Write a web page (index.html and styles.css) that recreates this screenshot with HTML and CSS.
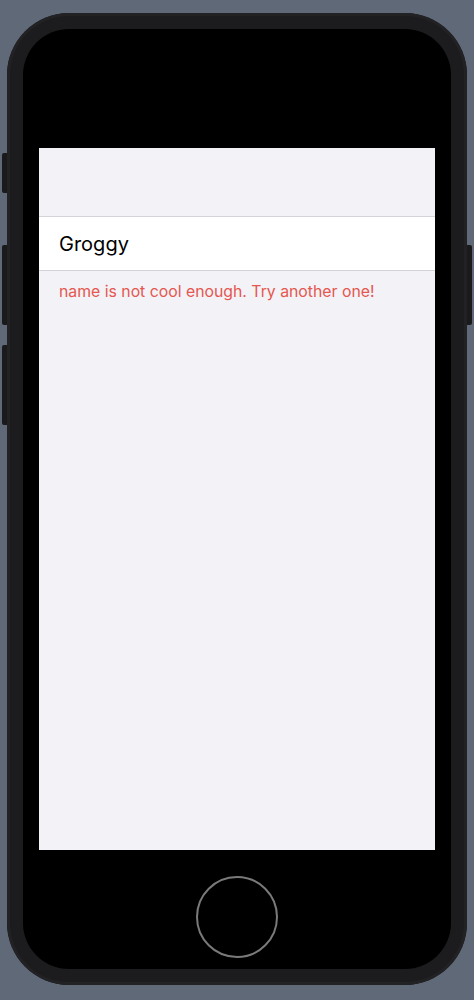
FILE: index.html
```html
<!DOCTYPE html>
<html>
<head>
<meta charset="utf-8">
<link rel="stylesheet" href="styles.css">
</head>
<body>
<div class="phone">
  <div class="btn btn-silent"></div>
  <div class="btn btn-volup"></div>
  <div class="btn btn-voldown"></div>
  <div class="btn btn-power"></div>
  <div class="bezel">
    <div class="screen">
      <div class="nav"></div>
      <div class="field">Groggy</div>
      <div class="error">name is not cool enough. Try another one!</div>
    </div>
    <div class="chin">
      <div class="home"></div>
    </div>
  </div>
</div>
</body>
</html>
```

FILE: styles.css
```css
html, body {
  margin: 0;
  padding: 0;
}
body {
  background: #5f6978;
  width: 474px;
  height: 1000px;
  padding: 13px 7px;
  box-sizing: border-box;
  font-family: Inter, "Noto Sans", sans-serif;
}
.phone {
  position: relative;
  width: 460px;
  height: 972px;
  box-sizing: border-box;
  padding: 16px;
  border-radius: 62px;
  background: #1c1c1e;
  box-shadow: inset 0 0 0 3px #222225;
}
.btn {
  position: absolute;
  width: 5px;
  background: #1a1a1c;
}
.btn-silent { left: -5px; top: 140px; height: 40px; border-radius: 2px 0 0 2px; }
.btn-volup { left: -5px; top: 232px; height: 80px; border-radius: 2px 0 0 2px; }
.btn-voldown { left: -5px; top: 332px; height: 80px; border-radius: 2px 0 0 2px; }
.btn-power { right: -5px; top: 232px; height: 80px; border-radius: 0 2px 2px 0; }
.bezel {
  width: 428px;
  height: 940px;
  box-sizing: border-box;
  background: #000;
  border-radius: 46px;
  padding: 119px 16px 0;
  display: flex;
  flex-direction: column;
}
.screen {
  height: 702px;
  background: #f2f2f7;
  display: flex;
  flex-direction: column;
}
.nav {
  height: 68px;
  border-bottom: 1px solid #d3d3d8;
}
.field {
  height: 53px;
  background: #fff;
  border-bottom: 1px solid #d3d3d8;
  display: flex;
  align-items: center;
  padding-left: 20px;
  font-size: 20px;
  color: #000;
}
.error {
  padding: 11px 0 0 20px;
  font-size: 15.8px;
  color: #e5574f;
}
.chin {
  flex: 1;
  display: flex;
  justify-content: center;
  padding-top: 26px;
}
.home {
  width: 78px;
  height: 78px;
  border-radius: 50%;
  border: 2px solid #7a7a7c;
}
```
